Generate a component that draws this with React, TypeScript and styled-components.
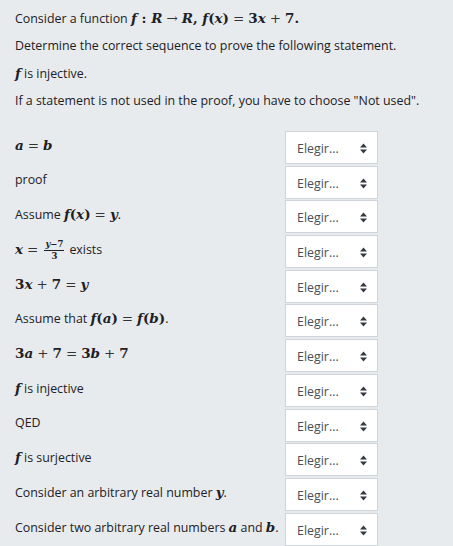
import React from "react";
import styled, { createGlobalStyle } from "styled-components";

const GlobalStyle = createGlobalStyle`
  html, body {
    margin: 0;
    padding: 0;
    background: #e8ebed;
  }
  body {
    font-family: "Open Sans", "Noto Sans", sans-serif;
    font-size: 12.4px;
    color: #1d2125;
  }
`;

const Formulation = styled.div`
  background: #e8ebed;
  padding: 8px 15px 3px;
  min-height: 546px;
  box-sizing: border-box;
`;

const Para = styled.p`
  margin: 0 0 7px;
  line-height: 20px;
  white-space: nowrap;
`;

const Math = styled.span`
  font-family: "DejaVu Serif", "Liberation Serif", serif;
  font-size: 13.5px;
  font-weight: 600;
  i {
    font-style: italic;
  }
`;

const Op = styled.span`
  margin: 0 4px;
  font-weight: normal;
  color: #333;
`;

const Frac = styled.span`
  display: inline-flex;
  flex-direction: column;
  align-items: center;
  vertical-align: middle;
  font-size: 8.5px;
  line-height: 9px;
  margin: 0 5px 0 2px;

  span:first-child {
    border-bottom: 1px solid #1d2125;
    padding: 0 1px 1px;
  }
  span:last-child {
    padding-top: 1px;
  }
`;

const Answers = styled.div`
  display: grid;
  grid-template-columns: 270px 93px;
  margin-top: 20px;
  row-gap: 1.7px;
`;

const Label = styled.div`
  padding-top: 4px;
  line-height: 20px;
  white-space: nowrap;
`;

const SelectWrap = styled.div`
  position: relative;
  height: 33px;
`;

const Select = styled.select`
  appearance: none;
  width: 100%;
  height: 100%;
  box-sizing: border-box;
  border: 1px solid #ced4da;
  background: #fff;
  border-radius: 0;
  padding: 2px 0 0 11px;
  font-family: "Open Sans", "Noto Sans", sans-serif;
  font-size: 12.4px;
  color: #495057;
  outline: none;
`;

const Arrow = styled.svg`
  position: absolute;
  right: 11px;
  top: 12px;
  pointer-events: none;
`;

function Chooser() {
  return (
    <SelectWrap>
      <Select defaultValue="">
        <option value="">Elegir...</option>
        <option value="1">1</option>
        <option value="2">2</option>
        <option value="n">Not used</option>
      </Select>
      <Arrow width="7" height="11" viewBox="0 0 7 11">
        <polygon points="0,4.5 3.5,0.5 7,4.5" fill="#343a40" />
        <polygon points="0,6.5 7,6.5 3.5,10.5" fill="#343a40" />
      </Arrow>
    </SelectWrap>
  );
}

const rows: React.ReactNode[] = [
  <Math>
    <i>a</i>
    <Op>=</Op>
    <i>b</i>
  </Math>,
  <>proof</>,
  <>
    Assume{" "}
    <Math>
      <i>f</i>(<i>x</i>)<Op>=</Op>
      <i>y</i>
    </Math>
    .
  </>,
  <>
    <Math>
      <i>x</i>
      <Op>=</Op>
      <Frac>
        <span>
          <i>y</i>−7
        </span>
        <span>3</span>
      </Frac>
    </Math>
    exists
  </>,
  <Math>
    3<i>x</i>
    <Op>+</Op>7<Op>=</Op>
    <i>y</i>
  </Math>,
  <>
    Assume that{" "}
    <Math>
      <i>f</i>(<i>a</i>)<Op>=</Op>
      <i>f</i>(<i>b</i>)
    </Math>
    .
  </>,
  <Math>
    3<i>a</i>
    <Op>+</Op>7<Op>=</Op>3<i>b</i>
    <Op>+</Op>7
  </Math>,
  <>
    <Math>
      <i>f</i>
    </Math>{" "}
    is injective
  </>,
  <>QED</>,
  <>
    <Math>
      <i>f</i>
    </Math>{" "}
    is surjective
  </>,
  <>
    Consider an arbitrary real number{" "}
    <Math>
      <i>y</i>
    </Math>
    .
  </>,
  <>
    Consider two arbitrary real numbers{" "}
    <Math>
      <i>a</i>
    </Math>{" "}
    and{" "}
    <Math>
      <i>b</i>
    </Math>
    .
  </>,
];

export default function App() {
  return (
    <Formulation>
      <GlobalStyle />
      <Para>
        Consider a function{" "}
        <Math>
          <i>f</i> : <i>R</i>
          <Op>→</Op>
          <i>R</i>, <i>f</i>(<i>x</i>)<Op>=</Op>3<i>x</i>
          <Op>+</Op>7.
        </Math>
      </Para>
      <Para>Determine the correct sequence to prove the following statement.</Para>
      <Para>
        <Math>
          <i>f</i>
        </Math>{" "}
        is injective.
      </Para>
      <Para>If a statement is not used in the proof, you have to choose "Not used".</Para>
      <Answers>
        {rows.map((r, i) => (
          <React.Fragment key={i}>
            <Label>{r}</Label>
            <Chooser />
          </React.Fragment>
        ))}
      </Answers>
    </Formulation>
  );
}
